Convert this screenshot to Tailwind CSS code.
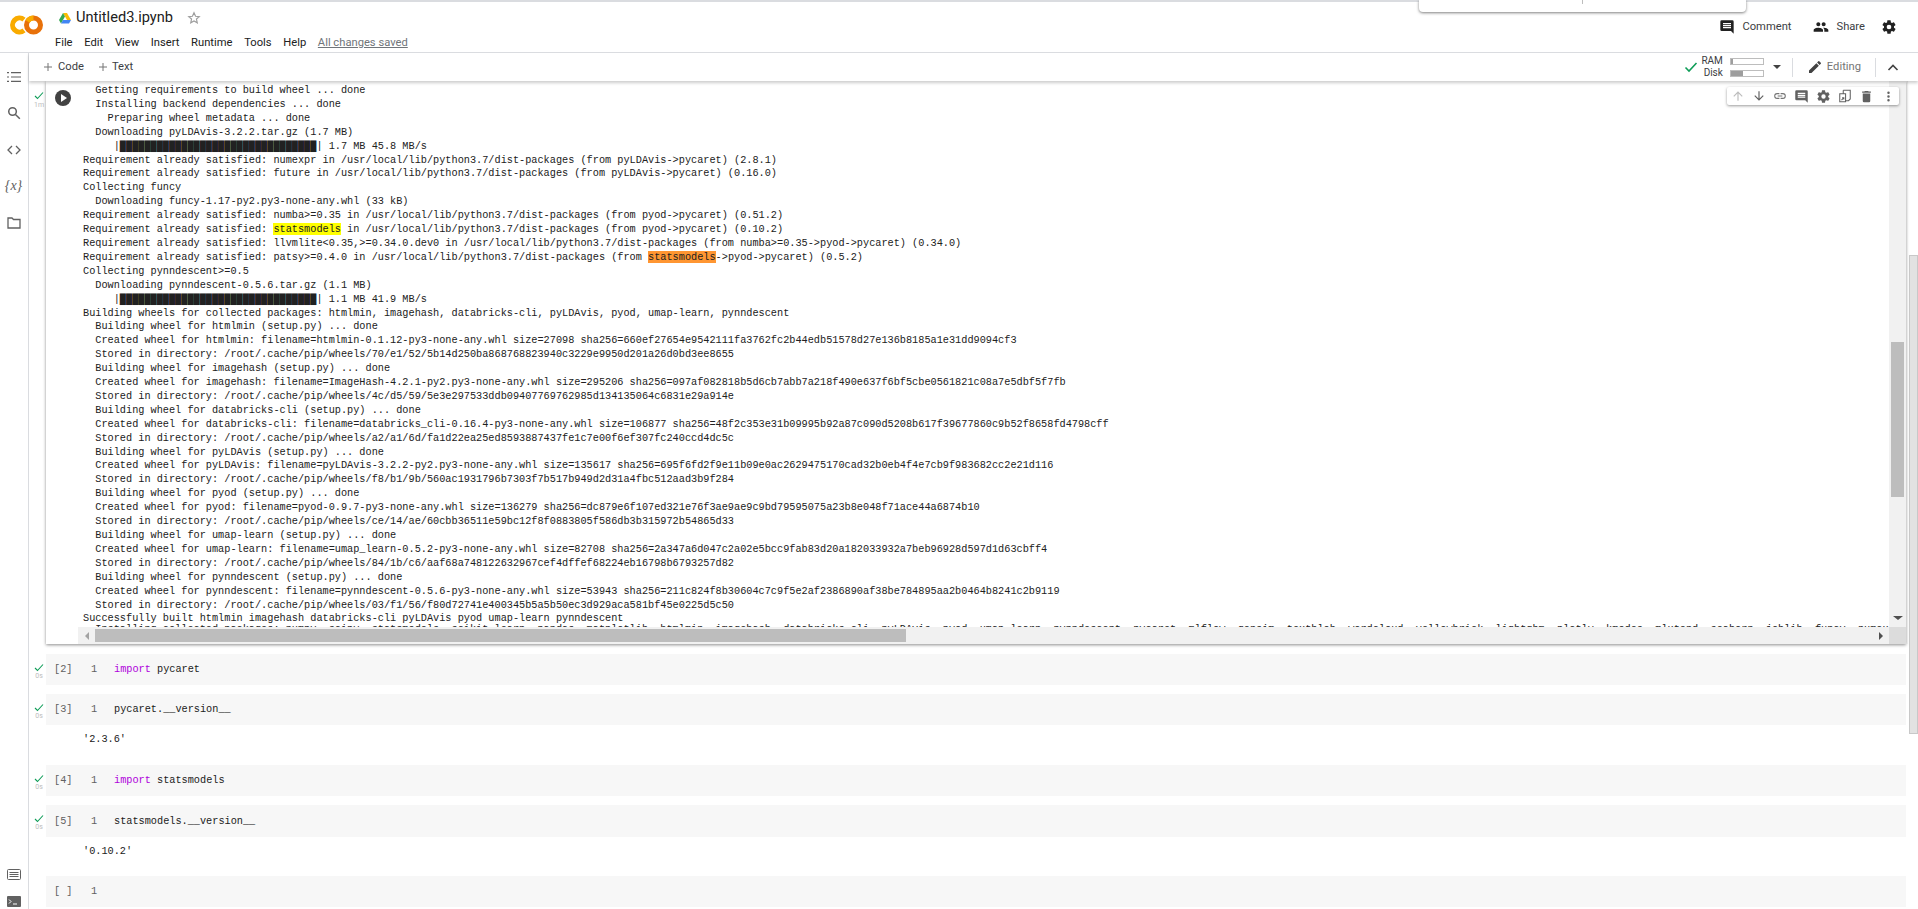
<!DOCTYPE html>
<html lang="en">

<head>
    <meta charset="UTF-8">
    <title>Untitled3.ipynb - Colaboratory</title>
    <script src="https://cdn.jsdelivr.net/npm/@tailwindcss/browser@4"></script>
</head>

<body class="h-[909px] w-[1918px] overflow-hidden bg-white font-['Roboto',sans-serif] text-[#212121]">

    <!-- header -->
    <header class="relative z-20 flex h-[53px] items-start border-t-2 border-b border-[#dadce0] bg-white">
        <svg class="ml-[10px] mt-[13px] h-[20px] w-[33px]" viewBox="0 0 33 20">
            <path d="M14 4.600A7 7 0 1 0 14 15.400" fill="none" stroke="#f9ab00" stroke-width="5" />
            <circle cx="23.500" cy="10" r="7" fill="none" stroke="#e8710a" stroke-width="5" />
            <path d="M17.500 6.400A7 7 0 0 1 23.500 3" fill="none" stroke="#f9ab00" stroke-width="5" />
        </svg>
        <div class="ml-[12px] flex flex-col">
            <div class="mt-[7px] ml-[4px] flex h-[18px] items-center">
                <svg class="h-[12px] w-[12px]" viewBox="0 0 24 24">
                    <path d="M8 2h8l8 14h-8z" fill="#fbbc04" />
                    <path d="M8 2 0 16l4 7 8-14z" fill="#34a853" />
                    <path d="M4 23h16l4-7H8z" fill="#4285f4" />
                </svg>
                <span class="ml-[5px] text-[14.6px]">Untitled3.ipynb</span>
                <svg class="ml-[14px] h-[14px] w-[14px]" viewBox="0 0 24 24" fill="none" stroke="#9e9e9e" stroke-width="2">
                    <path d="m12 3 2.700 6 6.300.600-4.800 4.200 1.400 6.400L12 17l-5.600 3.200 1.400-6.400L3 9.600 9.300 9z" />
                </svg>
            </div>
            <div class="mt-[4px] flex gap-[11.7px] text-[11.2px] leading-[24px]">
                <span>File</span><span>Edit</span><span>View</span><span>Insert</span><span>Runtime</span><span>Tools</span><span>Help</span>
                <span class="text-[#70757a] underline">All changes saved</span>
            </div>
        </div>
        <div class="absolute top-[-2px] left-[1419px] flex h-[12px] w-[327px] justify-center rounded-b-[4px] bg-white shadow-[0_1px_3px_rgba(0,0,0,0.5)]">
            <div class="h-[4px] w-px bg-[#bdbdbd]"></div>
        </div>
        <div class="ml-auto mt-[17px] flex items-center text-[11.2px] text-[#3c4043]">
            <svg class="h-[16px] w-[16px]" viewBox="0 0 24 24" fill="#212121">
                <path d="M21.990 4a2 2 0 0 0-2-2H4a2 2 0 0 0-2 2v12a2 2 0 0 0 2 2h14l4 4zM18 14H6v-2h12zm0-3H6V9h12zm0-3H6V6h12z" />
            </svg>
            <span class="ml-[7px]">Comment</span>
            <svg class="ml-[22px] h-[16px] w-[16px]" viewBox="0 0 24 24" fill="#212121">
                <path d="M16 11c1.660 0 2.990-1.340 2.990-3S17.660 5 16 5s-3 1.340-3 3 1.340 3 3 3m-8 0c1.660 0 2.990-1.340 2.990-3S9.660 5 8 5 5 6.340 5 8s1.340 3 3 3m0 2c-2.330 0-7 1.170-7 3.500V19h14v-2.500C15 14.170 10.330 13 8 13m8 0c-.290 0-.620.020-.970.050C16.190 13.890 17 15.020 17 16.500V19h6v-2.500c0-2.330-4.670-3.500-7-3.500" />
            </svg>
            <span class="ml-[7px]">Share</span>
            <svg class="ml-[16px] mr-[21px] h-[16px] w-[16px]" viewBox="0 0 24 24" fill="#212121">
                <path d="M19.430 12.980c.040-.320.070-.640.070-.980s-.030-.660-.070-.980l2.110-1.650c.190-.150.240-.420.120-.640l-2-3.460c-.120-.220-.390-.300-.610-.220l-2.490 1c-.520-.400-1.080-.730-1.690-.980l-.380-2.650A.49.49 0 0 0 14 2h-4c-.250 0-.460.180-.490.420l-.380 2.650c-.610.250-1.170.590-1.690.980l-2.490-1c-.230-.090-.490 0-.610.220l-2 3.460c-.130.220-.070.490.120.640l2.110 1.650c-.040.320-.070.650-.070.980s.030.660.070.980l-2.110 1.650c-.190.150-.240.420-.120.640l2 3.460c.120.220.390.300.610.220l2.490-1c.520.400 1.080.730 1.690.980l.380 2.650c.030.240.240.420.490.420h4c.250 0 .460-.180.490-.420l.380-2.650c.610-.250 1.170-.590 1.690-.980l2.490 1c.230.090.490 0 .610-.220l2-3.460c.120-.220.070-.490-.120-.640zM12 15.500a3.500 3.500 0 1 1 0-7 3.500 3.500 0 0 1 0 7" />
            </svg>
        </div>
    </header>

    <div class="flex h-[856px]">
        <!-- left rail -->
        <aside class="relative flex w-[29px] shrink-0 flex-col items-center border-r border-[#dadce0] pr-[1px] text-[#616161]">
            <svg class="mt-[17px] h-[14px] w-[14px]" viewBox="0 0 14 14" fill="#616161">
                <path d="M0 2h2v1.200H0zm4 0h10v1.200H4zM0 6.400h2v1.200H0zm4 0h10v1.200H4zM0 10.800h2V12H0zm4 0h10V12H4z" />
            </svg>
            <svg class="mt-[22px] h-[14px] w-[14px]" viewBox="0 0 24 24" fill="none" stroke="#616161" stroke-width="2.600">
                <circle cx="9.500" cy="9.500" r="6.500" />
                <path d="m14.500 14.500 7.500 7.500" />
            </svg>
            <svg class="mt-[24px] h-[12px] w-[14px]" viewBox="0 0 14 12" fill="none" stroke="#616161" stroke-width="1.300">
                <path d="M5 2 1 6l4 4M9 2l4 4-4 4" />
            </svg>
            <span class="mt-[22px] font-['Liberation_Serif',serif] text-[14px] leading-[16px] italic">{x}</span>
            <svg class="mt-[22px] h-[13px] w-[14px]" viewBox="0 0 14 13" fill="none" stroke="#616161" stroke-width="1.300">
                <path d="M1 2h4l1.500 1.500H13V12H1z" />
            </svg>
            <div class="mt-auto flex flex-col items-center gap-[15px]">
                <svg class="h-[12px] w-[14px]" viewBox="0 0 14 12" fill="none" stroke="#616161">
                    <rect x=".5" y=".5" width="13" height="10" rx="1" />
                    <path d="M2.500 3.500h9M2.500 5.500h9M2.500 7.500h9" />
                </svg>
                <svg class="h-[13px] w-[14px]" viewBox="0 0 14 13">
                    <rect width="14" height="11" rx="1" fill="#616161" />
                    <path d="m2 3.500 2 2-2 2M6 8h4" fill="none" stroke="#fff" />
                </svg>
            </div>
        </aside>

        <main class="relative min-w-0 flex-1">
            <!-- toolbar -->
            <div class="relative z-10 flex h-[28px] items-center bg-white pl-[15px] text-[11.2px] text-[#3c4043] shadow-[0_2px_3px_rgba(0,0,0,0.2)]">
                <svg class="h-[8px] w-[8px]" viewBox="0 0 8 8" stroke="#757575"><path d="M4 0v8M0 4h8" /></svg>
                <span class="ml-[6px]">Code</span>
                <svg class="ml-[15px] h-[8px] w-[8px]" viewBox="0 0 8 8" stroke="#757575"><path d="M4 0v8M0 4h8" /></svg>
                <span class="ml-[5px]">Text</span>
                <div class="ml-auto flex items-center">
                    <svg class="h-[12px] w-[14px]" viewBox="0 0 14 12" fill="none" stroke="#0f9d58" stroke-width="1.600">
                        <path d="m1.500 6.500 3.500 3.500 7.500-8" />
                    </svg>
                    <div class="ml-[3px] w-[22px] text-right text-[10px] leading-[12px]">
                        <div>RAM</div>
                        <div>Disk</div>
                    </div>
                    <div class="ml-[7px] flex flex-col gap-[5px]">
                        <div class="h-[7px] w-[34px] border border-[#bdbdbd]"><div class="h-full w-[2px] bg-[#9e9e9e]"></div></div>
                        <div class="h-[7px] w-[34px] border border-[#bdbdbd]"><div class="h-full w-[12px] bg-[#9e9e9e]"></div></div>
                    </div>
                    <div class="ml-[9px] h-0 w-0 border-x-[4px] border-t-[4px] border-x-transparent border-t-[#424242]"></div>
                    <div class="ml-[11px] h-[19px] w-px bg-[#dadce0]"></div>
                    <svg class="ml-[14px] h-[16px] w-[16px]" viewBox="0 0 24 24" fill="#424242">
                        <path d="M3 17.250V21h3.750L17.810 9.940l-3.750-3.750zM20.710 7.040a1 1 0 0 0 0-1.410l-2.340-2.340a1 1 0 0 0-1.410 0l-1.830 1.830 3.750 3.750z" />
                    </svg>
                    <span class="ml-[4px] text-[#757575]">Editing</span>
                    <div class="ml-[14px] h-[19px] w-px bg-[#dadce0]"></div>
                    <svg class="ml-[11px] mr-[19px] h-[9px] w-[12px]" viewBox="0 0 12 9" fill="none" stroke="#424242" stroke-width="1.600">
                        <path d="m1.500 7 4.500-4.500L10.500 7" />
                    </svg>
                </div>
            </div>

            <!-- cell with pip output -->
            <div class="relative flex h-[563px]">
                <div class="flex w-[17px] shrink-0 flex-col items-center pt-[10px] pl-[3px]">
                    <svg class="h-[9px] w-[10px]" viewBox="0 0 10 9" fill="none" stroke="#0f9d58" stroke-width="1.100">
                        <path d="m1 5 2.500 2.500L9 1.500" />
                    </svg>
                    <span class="text-[7px] leading-[10px] text-[#bdbdbd]">1m</span>
                </div>
                <div class="flex h-[563px] w-[1860px] shrink-0 bg-white shadow-[0_1px_3px_rgba(0,0,0,0.45)]">
                    <div class="w-[32px] shrink-0 pt-[9px] pl-[9px]">
                        <div class="flex h-[16px] w-[16px] items-center justify-center rounded-full bg-[#424242]">
                            <div class="ml-[2px] h-0 w-0 border-y-[4px] border-l-[6px] border-y-transparent border-l-white"></div>
                        </div>
                    </div>
                    <div class="flex min-w-0 flex-1 flex-col">
                        <div class="flex min-h-0 flex-1">
                            <pre class="min-w-0 flex-1 overflow-hidden pt-[3px] pl-[5px] font-['Liberation_Mono',monospace] text-[10.24px] leading-[13.9px] text-[#212121]">  Getting requirements to build wheel ... done
  Installing backend dependencies ... done
    Preparing wheel metadata ... done
  Downloading pyLDAvis-3.2.2.tar.gz (1.7 MB)
     |████████████████████████████████| 1.7 MB 45.8 MB/s
Requirement already satisfied: numexpr in /usr/local/lib/python3.7/dist-packages (from pyLDAvis-&gt;pycaret) (2.8.1)
Requirement already satisfied: future in /usr/local/lib/python3.7/dist-packages (from pyLDAvis-&gt;pycaret) (0.16.0)
Collecting funcy
  Downloading funcy-1.17-py2.py3-none-any.whl (33 kB)
Requirement already satisfied: numba&gt;=0.35 in /usr/local/lib/python3.7/dist-packages (from pyod-&gt;pycaret) (0.51.2)
Requirement already satisfied: <span class="bg-[#ffff00]">statsmodels</span> in /usr/local/lib/python3.7/dist-packages (from pyod-&gt;pycaret) (0.10.2)
Requirement already satisfied: llvmlite&lt;0.35,&gt;=0.34.0.dev0 in /usr/local/lib/python3.7/dist-packages (from numba&gt;=0.35-&gt;pyod-&gt;pycaret) (0.34.0)
Requirement already satisfied: patsy&gt;=0.4.0 in /usr/local/lib/python3.7/dist-packages (from <span class="bg-[#ff9632]">statsmodels</span>-&gt;pyod-&gt;pycaret) (0.5.2)
Collecting pynndescent&gt;=0.5
  Downloading pynndescent-0.5.6.tar.gz (1.1 MB)
     |████████████████████████████████| 1.1 MB 41.9 MB/s
Building wheels for collected packages: htmlmin, imagehash, databricks-cli, pyLDAvis, pyod, umap-learn, pynndescent
  Building wheel for htmlmin (setup.py) ... done
  Created wheel for htmlmin: filename=htmlmin-0.1.12-py3-none-any.whl size=27098 sha256=660ef27654e9542111fa3762fc2b44edb51578d27e136b8185a1e31dd9094cf3
  Stored in directory: /root/.cache/pip/wheels/70/e1/52/5b14d250ba868768823940c3229e9950d201a26d0bd3ee8655
  Building wheel for imagehash (setup.py) ... done
  Created wheel for imagehash: filename=ImageHash-4.2.1-py2.py3-none-any.whl size=295206 sha256=097af082818b5d6cb7abb7a218f490e637f6bf5cbe0561821c08a7e5dbf5f7fb
  Stored in directory: /root/.cache/pip/wheels/4c/d5/59/5e3e297533ddb09407769762985d134135064c6831e29a914e
  Building wheel for databricks-cli (setup.py) ... done
  Created wheel for databricks-cli: filename=databricks_cli-0.16.4-py3-none-any.whl size=106877 sha256=48f2c353e31b09995b92a87c090d5208b617f39677860c9b52f8658fd4798cff
  Stored in directory: /root/.cache/pip/wheels/a2/a1/6d/fa1d22ea25ed8593887437fe1c7e00f6ef307fc240ccd4dc5c
  Building wheel for pyLDAvis (setup.py) ... done
  Created wheel for pyLDAvis: filename=pyLDAvis-3.2.2-py2.py3-none-any.whl size=135617 sha256=695f6fd2f9e11b09e0ac2629475170cad32b0eb4f4e7cb9f983682cc2e21d116
  Stored in directory: /root/.cache/pip/wheels/f8/b1/9b/560ac1931796b7303f7b517b949d2d31a4fbc512aad3b9f284
  Building wheel for pyod (setup.py) ... done
  Created wheel for pyod: filename=pyod-0.9.7-py3-none-any.whl size=136279 sha256=dc879e6f107ed321e76f3ae9ae9c9bd79595075a23b8e048f71ace44a6874b10
  Stored in directory: /root/.cache/pip/wheels/ce/14/ae/60cbb36511e59bc12f8f0883805f586db3b315972b54865d33
  Building wheel for umap-learn (setup.py) ... done
  Created wheel for umap-learn: filename=umap_learn-0.5.2-py3-none-any.whl size=82708 sha256=2a347a6d047c2a02e5bcc9fab83d20a182033932a7beb96928d597d1d63cbff4
  Stored in directory: /root/.cache/pip/wheels/84/1b/c6/aaf68a748122632967cef4dffef68224eb16798b6793257d82
  Building wheel for pynndescent (setup.py) ... done
  Created wheel for pynndescent: filename=pynndescent-0.5.6-py3-none-any.whl size=53943 sha256=211c824f8b30604c7c9f5e2af2386890af38be784895aa2b0464b8241c2b9119
  Stored in directory: /root/.cache/pip/wheels/03/f1/56/f80d72741e400345b5a5b50ec3d929aca581bf45e0225d5c50
Successfully built htmlmin imagehash databricks-cli pyLDAvis pyod umap-learn pynndescent
<span class="relative top-[-3px]">  Installing collected packages: numpy, scipy, statsmodels, scikit-learn, pandas, matplotlib, htmlmin, imagehash, databricks-cli, pyLDAvis, pyod, umap-learn, pynndescent, pycaret, mlflow, gensim, textblob, wordcloud, yellowbrick, lightgbm, plotly, kmodes, mlxtend, seaborn, joblib, funcy, numexpr, future, numba, llvmlite, patsy, Boruta, IPython</span></pre>
                            <!-- output scrollbar -->
                            <div class="relative w-[17px] shrink-0 bg-[#f1f1f1]">
                                <div class="absolute top-[261px] left-[2px] h-[155px] w-[13px] bg-[#bdbdbd]"></div>
                                <div class="absolute right-[3px] bottom-[7px] h-0 w-0 border-x-[5px] border-t-[4px] border-x-transparent border-t-[#505050]"></div>
                            </div>
                        </div>
                        <!-- horizontal scrollbar -->
                        <div class="relative flex h-[17px] shrink-0 bg-[#f1f1f1]">
                            <div class="flex w-[17px] items-center justify-center">
                                <div class="h-0 w-0 border-y-[4px] border-r-[4px] border-y-transparent border-r-[#a3a3a3]"></div>
                            </div>
                            <div class="my-[2px] w-[811px] bg-[#bdbdbd]"></div>
                            <div class="ml-auto flex w-[17px] items-center justify-center">
                                <div class="h-0 w-0 border-y-[4px] border-l-[4px] border-y-transparent border-l-[#505050]"></div>
                            </div>
                            <div class="w-[17px] bg-[#dcdcdc]"></div>
                        </div>
                    </div>
                </div>
                <!-- cell toolbar -->
                <div class="absolute top-[6px] left-[1698px] flex h-[18px] w-[172px] items-center justify-around rounded-[2px] bg-white shadow-[0_1px_3px_rgba(0,0,0,0.4)]">
                    <svg class="h-[14px] w-[14px]" viewBox="0 0 24 24" fill="#bdbdbd"><path d="m4 12 1.410 1.410L11 7.830V20h2V7.830l5.580 5.590L20 12l-8-8z" /></svg>
                    <svg class="h-[14px] w-[14px]" viewBox="0 0 24 24" fill="#616161"><path d="m20 12-1.410-1.410L13 16.170V4h-2v12.170l-5.580-5.590L4 12l8 8z" /></svg>
                    <svg class="h-[14px] w-[14px]" viewBox="0 0 24 24" fill="#757575"><path d="M3.900 12c0-1.710 1.390-3.100 3.100-3.100h4V7H7a5 5 0 0 0 0 10h4v-1.900H7c-1.710 0-3.100-1.390-3.100-3.100M8 13h8v-2H8zm9-6h-4v1.900h4c1.710 0 3.100 1.390 3.100 3.100s-1.390 3.100-3.100 3.100h-4V17h4a5 5 0 0 0 0-10" /></svg>
                    <svg class="h-[15px] w-[15px]" viewBox="0 0 24 24" fill="#616161"><path d="M21.990 4a2 2 0 0 0-2-2H4a2 2 0 0 0-2 2v12a2 2 0 0 0 2 2h14l4 4zM18 14H6v-2h12zm0-3H6V9h12zm0-3H6V6h12z" /></svg>
                    <svg class="h-[15px] w-[15px]" viewBox="0 0 24 24" fill="#616161"><path d="M19.430 12.980c.040-.320.070-.640.070-.980s-.030-.660-.070-.980l2.110-1.650c.190-.150.240-.420.120-.640l-2-3.460c-.120-.220-.390-.300-.610-.220l-2.490 1c-.520-.400-1.080-.730-1.690-.980l-.380-2.650A.49.49 0 0 0 14 2h-4c-.250 0-.460.180-.49.420l-.380 2.650c-.610.250-1.170.590-1.690.980l-2.490-1c-.230-.090-.490 0-.610.220l-2 3.460c-.130.220-.070.490.120.640l2.110 1.650c-.040.320-.070.650-.070.980s.030.660.070.980l-2.110 1.650c-.190.150-.240.420-.120.640l2 3.460c.120.220.390.300.610.220l2.490-1c.520.400 1.080.730 1.690.980l.380 2.650c.030.240.240.420.490.420h4c.250 0 .460-.180.490-.420l.380-2.650c.610-.250 1.170-.590 1.690-.980l2.490 1c.230.090.490 0 .610-.220l2-3.460c.120-.220.070-.490-.120-.640zM12 15.500a3.500 3.500 0 1 1 0-7 3.500 3.500 0 0 1 0 7" /></svg>
                    <svg class="h-[14px] w-[14px]" viewBox="0 0 24 24" fill="none" stroke="#616161" stroke-width="1.800"><path d="M9 2h12v15l-3 3h-6M9 2v6M3 8h10v14H3zM6 19l4-4M7 15h3v3" /></svg>
                    <svg class="h-[15px] w-[15px]" viewBox="0 0 24 24" fill="#616161"><path d="M6 19a2 2 0 0 0 2 2h8a2 2 0 0 0 2-2V7H6zM19 4h-3.500l-1-1h-5l-1 1H5v2h14z" /></svg>
                    <svg class="h-[15px] w-[15px]" viewBox="0 0 24 24" fill="#616161"><path d="M12 8a2 2 0 1 0 0-4 2 2 0 0 0 0 4m0 2a2 2 0 1 0 0 4 2 2 0 0 0 0-4m0 6a2 2 0 1 0 0 4 2 2 0 0 0 0-4" /></svg>
                </div>
            </div>

            <!-- code cells -->
            <div class="mt-[10px] flex h-[31px]">
                <div class="flex w-[17px] shrink-0 flex-col items-center pt-[9px] pl-[3px]">
                    <svg class="h-[9px] w-[10px]" viewBox="0 0 10 9" fill="none" stroke="#0f9d58" stroke-width="1.100"><path d="m1 5 2.500 2.500L9 1.500" /></svg>
                    <span class="text-[7px] leading-[9px] text-[#bdbdbd]">0s</span>
                </div>
                <div class="flex h-full w-[1860px] items-center bg-[#f7f7f7] pt-[1px] font-['Liberation_Mono',monospace] text-[10.24px] whitespace-pre">
                    <span class="ml-[8px] w-[37px] text-[#616161]">[2]</span><span class="w-[23px] text-[#616161]">1</span><span class="text-[#af00db]">import</span><span> pycaret</span>
                </div>
            </div>
            <div class="mt-[9px] flex h-[31px]">
                <div class="flex w-[17px] shrink-0 flex-col items-center pt-[9px] pl-[3px]">
                    <svg class="h-[9px] w-[10px]" viewBox="0 0 10 9" fill="none" stroke="#0f9d58" stroke-width="1.100"><path d="m1 5 2.500 2.500L9 1.500" /></svg>
                    <span class="text-[7px] leading-[9px] text-[#bdbdbd]">0s</span>
                </div>
                <div class="flex h-full w-[1860px] items-center bg-[#f7f7f7] pt-[1px] font-['Liberation_Mono',monospace] text-[10.24px] whitespace-pre">
                    <span class="ml-[8px] w-[37px] text-[#616161]">[3]</span><span class="w-[23px] text-[#616161]">1</span><span>pycaret.__version__</span>
                </div>
            </div>
            <div class="flex h-[40px] items-center pb-[10px] pl-[54px] font-['Liberation_Mono',monospace] text-[10.24px] whitespace-pre">'2.3.6'</div>
            <div class="flex h-[31px]">
                <div class="flex w-[17px] shrink-0 flex-col items-center pt-[9px] pl-[3px]">
                    <svg class="h-[9px] w-[10px]" viewBox="0 0 10 9" fill="none" stroke="#0f9d58" stroke-width="1.100"><path d="m1 5 2.500 2.500L9 1.500" /></svg>
                    <span class="text-[7px] leading-[9px] text-[#bdbdbd]">0s</span>
                </div>
                <div class="flex h-full w-[1860px] items-center bg-[#f7f7f7] pt-[1px] font-['Liberation_Mono',monospace] text-[10.24px] whitespace-pre">
                    <span class="ml-[8px] w-[37px] text-[#616161]">[4]</span><span class="w-[23px] text-[#616161]">1</span><span class="text-[#af00db]">import</span><span> statsmodels</span>
                </div>
            </div>
            <div class="mt-[9px] flex h-[32px]">
                <div class="flex w-[17px] shrink-0 flex-col items-center pt-[9px] pl-[3px]">
                    <svg class="h-[9px] w-[10px]" viewBox="0 0 10 9" fill="none" stroke="#0f9d58" stroke-width="1.100"><path d="m1 5 2.500 2.500L9 1.500" /></svg>
                    <span class="text-[7px] leading-[9px] text-[#bdbdbd]">0s</span>
                </div>
                <div class="flex h-full w-[1860px] items-center bg-[#f7f7f7] pt-[1px] font-['Liberation_Mono',monospace] text-[10.24px] whitespace-pre">
                    <span class="ml-[8px] w-[37px] text-[#616161]">[5]</span><span class="w-[23px] text-[#616161]">1</span><span>statsmodels.__version__</span>
                </div>
            </div>
            <div class="flex h-[39px] items-center pb-[10px] pl-[54px] font-['Liberation_Mono',monospace] text-[10.24px] whitespace-pre">'0.10.2'</div>
            <div class="flex h-[31px]">
                <div class="w-[17px] shrink-0"></div>
                <div class="flex h-full w-[1860px] items-center bg-[#f7f7f7] pt-[1px] font-['Liberation_Mono',monospace] text-[10.24px] whitespace-pre">
                    <span class="ml-[8px] w-[37px] text-[#616161]">[ ]</span><span class="w-[23px] text-[#616161]">1</span>
                </div>
            </div>

            <!-- page scrollbar -->
            <div class="absolute top-[28px] right-[10px] h-[563px] w-px bg-[#e8e8e8]"></div>
            <div class="absolute top-[202px] right-0 h-[479px] w-[9px] border border-[#c8c8c8] bg-[#e2e2e2]"></div>
        </main>
    </div>
</body>

</html>
